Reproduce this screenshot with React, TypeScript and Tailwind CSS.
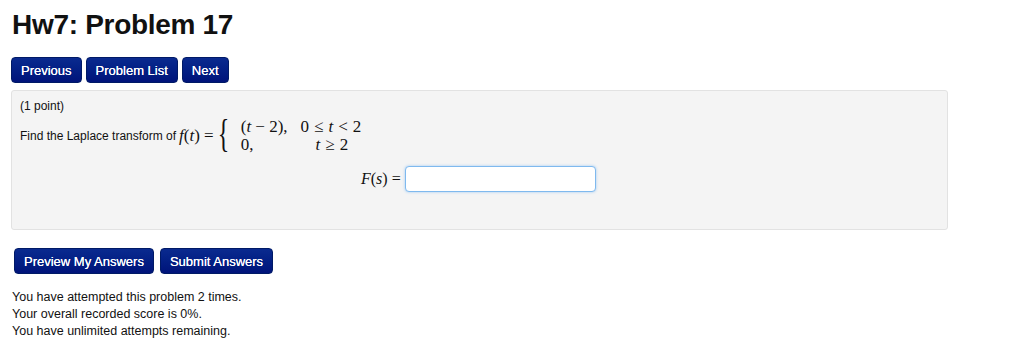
const btn =
  'h-[26px] px-[9px] rounded-[4px] border border-[#001a66] bg-gradient-to-b from-[#0a2a8f] to-[#00137a] text-white text-[13px] leading-none flex items-center [text-shadow:0_0_0.4px_#fff]';

const Rel = ({ c }: { c: string }) => <span className="mx-[5px]">{c}</span>;

const App = () => {
  return (
    <div className="w-[1024px] h-[346px] bg-white text-[#111] font-['Liberation_Sans',Arial,sans-serif] px-[11px] pt-[8px]">
      {/* Title */}
      <h1 className="text-[28px] font-bold leading-[34px] tracking-[-0.3px] ml-[1px]">Hw7: Problem 17</h1>

      {/* Nav */}
      <div className="flex gap-[4px] mt-[15px]">
        <button className={btn}>Previous</button>
        <button className={btn}>Problem List</button>
        <button className={btn}>Next</button>
      </div>

      {/* Problem box */}
      <div className="mt-[7px] w-[937px] h-[140px] bg-[#f4f4f4] border border-[#e2e2e2] rounded-[3px] px-[8px] pt-[7px]">
        <p className="text-[12px] leading-[16px]">(1 point)</p>
        <div className="flex items-center mt-[4px] text-[12px]">
          <span>Find the Laplace transform of</span>
          <span className="ml-[3px] font-['Liberation_Serif',serif] text-[17px] flex items-center">
            <span className="italic">f</span>(<span className="italic">t</span>)
            <span className="ml-[4px] mr-[2px]">=</span>
            <span className="text-[40px] leading-none font-light scale-x-[0.6] -mt-[4px] -ml-[2px] mr-[8px]">{'{'}</span>
            <span className="grid grid-cols-[auto_auto] gap-x-[13px] leading-[18px]">
              <span>(<span className="italic">t</span> − 2),</span>
              <span>0<Rel c="≤" /><span className="italic">t</span><Rel c="<" />2</span>
              <span>0,</span>
              <span className="pl-[15px]"><span className="italic">t</span><Rel c="≥" />2</span>
            </span>
          </span>
        </div>
        <div className="flex items-center mt-[12px] ml-[341px]">
          <span className="font-['Liberation_Serif',serif] text-[16px] mr-[4px]">
            <span className="italic">F</span>(<span className="italic">s</span>) =
          </span>
          <input
            className="w-[191px] h-[26px] bg-white border border-[#7fb9ee] rounded-[4px] shadow-[0_0_3px_#9fcaf3] outline-none"
            type="text"
          />
        </div>
      </div>

      {/* Submit */}
      <div className="flex gap-[6px] mt-[18px] ml-[3px]">
        <button className={btn}>Preview My Answers</button>
        <button className={btn}>Submit Answers</button>
      </div>

      {/* Status */}
      <div className="mt-[15px] text-[12.5px] leading-[17px] ml-[1px]">
        <p>You have attempted this problem 2 times.</p>
        <p>Your overall recorded score is 0%.</p>
        <p>You have unlimited attempts remaining.</p>
      </div>
    </div>
  );
};

export default App;
